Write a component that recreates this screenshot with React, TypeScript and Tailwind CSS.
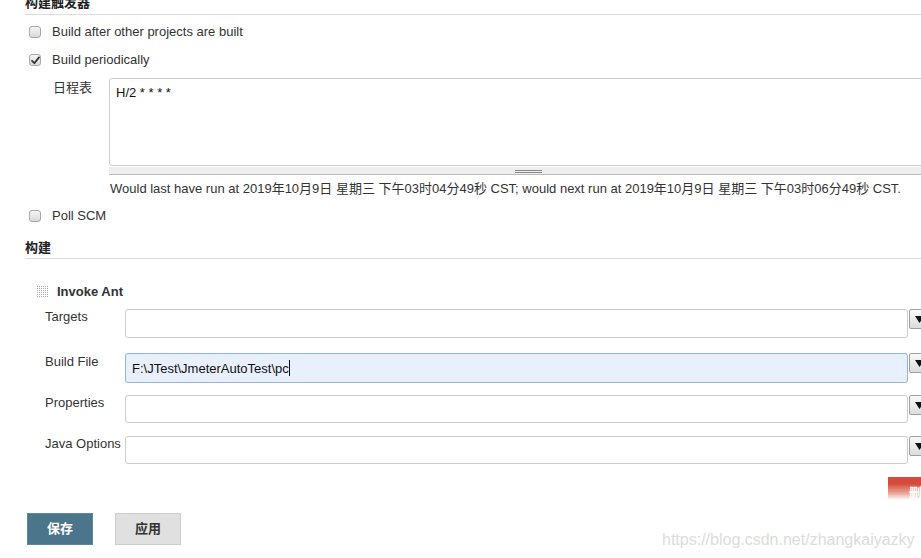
import React from "react";

function Checkbox({ checked }: { checked?: boolean }) {
  return (
    <span className="relative flex h-[12px] w-[12px] shrink-0 items-center justify-center rounded-[3px] border border-[#a9a9a9] bg-gradient-to-b from-[#f6f6f6] to-[#dadada]">
      {checked && (
        <svg width="9" height="9" viewBox="0 0 9 9">
          <path d="M1 4.8 L3.4 7.2 L8 1.4" fill="none" stroke="#333" strokeWidth="1.8" strokeLinecap="round" strokeLinejoin="round" />
        </svg>
      )}
    </span>
  );
}

function DropBtn() {
  return (
    <div className="ml-[1px] flex h-[20px] w-[24px] shrink-0 items-center rounded-[2px] border border-[#a0a0a0] bg-gradient-to-b from-[#fafafa] to-[#dcdcdc] pl-[5px]">
      <svg width="9" height="7" viewBox="0 0 9 7">
        <polygon points="0,0 9,0 4.5,7" fill="#111" />
      </svg>
    </div>
  );
}

function DragIcon() {
  const dots: React.ReactElement[] = [];
  for (let r = 0; r < 6; r++) {
    for (let c = 0; c < 6; c++) {
      dots.push(<rect key={`${r}-${c}`} x={c * 2} y={r * 2 + 1} width="1" height="1" fill="#a8a8a8" />);
    }
  }
  return (
    <svg width="12" height="13" viewBox="0 0 12 13" className="shrink-0">
      {dots}
    </svg>
  );
}

function FieldRow({
  label,
  mt,
  h,
  focused,
  value,
}: {
  label: string;
  mt: string;
  h: string;
  focused?: boolean;
  value?: string;
}) {
  return (
    <div className={`flex pl-[20px] ${mt}`}>
      <div className={`w-[80px] shrink-0 leading-[17px] ${focused ? "mt-[0px]" : "mt-[-1px]"}`}>{label}</div>
      <div
        className={`flex w-[783px] shrink-0 items-center rounded-[3px] border pl-[6px] ${h} ${
          focused ? "border-[#92b4ee] bg-[#e8f0fe]" : "border-[#cccccc] bg-white"
        }`}
      >
        {value && (
          <>
            <span className="leading-[17px] text-[#111]">{value}</span>
            <span className="h-[16px] w-px bg-[#111]" />
          </>
        )}
      </div>
      <DropBtn />
    </div>
  );
}

export default function App() {
  return (
    <div className="relative h-[558px] w-[921px] overflow-hidden bg-white font-['Liberation_Sans','Noto_Sans_CJK_SC',sans-serif] text-[13px] text-[#333]">
      <div className="flex flex-col pl-[25px]">
        {/* 构建触发器 heading */}
        <div className="mt-[-6px] h-[21px] border-b border-[#dddddd] font-bold leading-[17px] text-[#222]">构建触发器</div>

        <div className="mt-[3px] flex h-[28px] items-center gap-[11px] pl-[4px]">
          <Checkbox />
          <span>Build after other projects are built</span>
        </div>
        <div className="flex h-[28px] items-center gap-[11px] pl-[4px]">
          <Checkbox checked />
          <span>Build periodically</span>
        </div>

        <div className="mt-[4px] flex">
          <div className="w-[84px] shrink-0 pl-[28px] pt-[1px] leading-[17px]">日程表</div>
          <div className="flex w-[838px] shrink-0 flex-col">
            <div className="h-[88px] rounded-[3px] border border-[#cccccc] px-[6px] pt-[5px] leading-[17px] text-[#111]">
              H/2 * * * *
            </div>
            <div className="mt-[1px] flex h-[8px] justify-center border-b border-[#bbbbbb] bg-[#eeeeee] pt-[3px]">
              <div className="flex flex-col gap-[1px]">
                <div className="h-px w-[27px] bg-[#8a8a8a]" />
                <div className="h-px w-[27px] bg-[#8a8a8a]" />
              </div>
            </div>
            <div className="mt-[5px] whitespace-nowrap pl-[1px] leading-[17px]">
              Would last have run at 2019年10月9日 星期三 下午03时04分49秒 CST; would next run at 2019年10月9日 星期三 下午03时06分49秒 CST.
            </div>
          </div>
        </div>

        <div className="mt-[5px] flex h-[28px] items-center gap-[11px] pl-[4px]">
          <Checkbox />
          <span>Poll SCM</span>
        </div>

        {/* 构建 heading */}
        <div className="mt-[9px] border-b border-[#dddddd] pb-[2px] font-bold leading-[17px] text-[#222]">构建</div>

        <div className="mt-[24px] flex h-[17px] items-center gap-[8px] pl-[12px]">
          <DragIcon />
          <span className="font-bold leading-[17px]">Invoke Ant</span>
        </div>

        <FieldRow label="Targets" mt="mt-[9px]" h="h-[29px]" />
        <FieldRow label="Build File" mt="mt-[15px]" h="h-[30px]" focused value="F:\JTest\JmeterAutoTest\pc" />
        <FieldRow label="Properties" mt="mt-[12px]" h="h-[28px]" />
        <FieldRow label="Java Options" mt="mt-[13px]" h="h-[28px]" />

        <div className="mt-[13px] flex justify-end">
          <div className="h-[23px] w-[33px] overflow-hidden bg-gradient-to-b from-[#d44b3b] from-30% via-[#e9a39b] via-70% to-white pl-[21px] pt-[9px] text-[13px] font-bold leading-[13px] text-white">
            删除
          </div>
        </div>

        <div className="mt-[13px] flex gap-[22px] pl-[2px]">
          <button className="h-[32px] w-[66px] border border-[#5b87a0] bg-[#4b758b] font-bold text-white">保存</button>
          <button className="h-[32px] w-[66px] border border-[#cccccc] bg-[#e0e0e0] font-bold text-[#333]">应用</button>
        </div>
      </div>

      <div className="absolute left-[662px] top-[529px] text-[16px] leading-[21px] text-[#dcdcdc]">
        https://blog.csdn.net/zhangkaiyazky
      </div>
    </div>
  );
}
